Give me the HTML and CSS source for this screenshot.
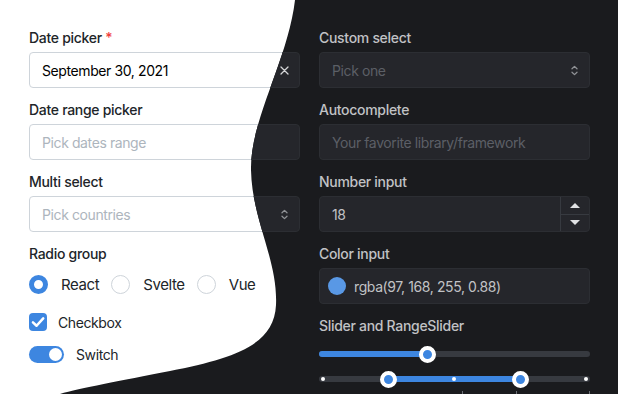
FILE: index.html
```html
<!DOCTYPE html>
<html lang="en">
<head>
    <meta charset="UTF-8">
    <meta name="viewport" content="width=device-width, initial-scale=1.0">
    <title>Components</title>
    <link rel="stylesheet" href="styles.css">
</head>
<body>
    <div class="stage">
        <!-- light theme, left column only -->
        <div class="layer layer-light">
            <div class="col">
                <div class="field">
                    <label class="label">Date picker <span class="req">*</span></label>
                    <div class="input">
                        <span class="value">September 30, 2021</span>
                        <svg class="icon" viewBox="0 0 15 15"><path d="M4 4L11 11M11 4L4 11" /></svg>
                    </div>
                </div>
                <div class="field">
                    <label class="label">Date range picker</label>
                    <div class="input"><span class="value placeholder">Pick dates range</span></div>
                </div>
                <div class="field">
                    <label class="label">Multi select</label>
                    <div class="input">
                        <span class="value placeholder">Pick countries</span>
                        <svg class="icon icon-sort" viewBox="0 0 15 15"><path d="M5 5.8L7.5 3.4L10 5.8M5 9.2L7.5 11.6L10 9.2" /></svg>
                    </div>
                </div>
                <label class="label group-label">Radio group</label>
                <div class="radios">
                    <div class="radio-item"><span class="radio on"></span>React</div>
                    <div class="radio-item"><span class="radio"></span>Svelte</div>
                    <div class="radio-item"><span class="radio"></span>Vue</div>
                </div>
                <div class="check-row">
                    <span class="checkbox"><svg viewBox="0 0 10 10"><path d="M2.2 5.2L4.2 7.1L7.9 3" /></svg></span>
                    Checkbox
                </div>
                <div class="switch-row">
                    <span class="switch"><span class="knob"></span></span>
                    Switch
                </div>
            </div>
        </div>

        <!-- dark theme, clipped by the wave -->
        <div class="layer layer-dark">
            <div class="col">
                <div class="field">
                    <label class="label">Date picker <span class="req">*</span></label>
                    <div class="input">
                        <span class="value">September 30, 2021</span>
                        <svg class="icon" viewBox="0 0 15 15"><path d="M4 4L11 11M11 4L4 11" /></svg>
                    </div>
                </div>
                <div class="field">
                    <label class="label">Date range picker</label>
                    <div class="input"><span class="value placeholder">Pick dates range</span></div>
                </div>
                <div class="field">
                    <label class="label">Multi select</label>
                    <div class="input">
                        <span class="value placeholder">Pick countries</span>
                        <svg class="icon icon-sort" viewBox="0 0 15 15"><path d="M5 5.8L7.5 3.4L10 5.8M5 9.2L7.5 11.6L10 9.2" /></svg>
                    </div>
                </div>
            </div>
            <div class="col">
                <div class="field">
                    <label class="label">Custom select</label>
                    <div class="input">
                        <span class="value placeholder">Pick one</span>
                        <svg class="icon icon-sort" viewBox="0 0 15 15"><path d="M5 5.8L7.5 3.4L10 5.8M5 9.2L7.5 11.6L10 9.2" /></svg>
                    </div>
                </div>
                <div class="field">
                    <label class="label">Autocomplete</label>
                    <div class="input"><span class="value placeholder">Your favorite library/framework</span></div>
                </div>
                <div class="field">
                    <label class="label">Number input</label>
                    <div class="input input-number">
                        <span class="value">18</span>
                        <div class="controls">
                            <span class="step"><span class="arrow-up"></span></span>
                            <span class="step"><span class="arrow-down"></span></span>
                        </div>
                    </div>
                </div>
                <div class="field">
                    <label class="label">Color input</label>
                    <div class="input input-color">
                        <span class="swatch"></span>
                        <span class="value">rgba(97, 168, 255, 0.88)</span>
                    </div>
                </div>
                <label class="label">Slider and RangeSlider</label>
                <div class="slider">
                    <div class="track"></div>
                    <div class="bar" style="left: 0; width: 40%;"></div>
                    <span class="thumb" style="left: 40%;"></span>
                </div>
                <div class="slider slider-range">
                    <div class="track"></div>
                    <div class="bar" style="left: 25.5%; width: 48.7%;"></div>
                    <span class="mark" style="left: 1.5%;"></span>
                    <span class="mark" style="left: 49.8%;"></span>
                    <span class="mark" style="left: 98.5%;"></span>
                    <span class="thumb" style="left: 25.5%;"></span>
                    <span class="thumb" style="left: 74.2%;"></span>
                </div>
                <div class="ticks">
                    <span class="tick" style="left: 52.8%;"></span>
                    <span class="tick" style="left: 72.7%;"></span>
                    <span class="tick" style="left: 99.6%;"></span>
                </div>
            </div>
        </div>
    </div>
</body>
</html>
```

FILE: styles.css
```css
* {
    box-sizing: border-box;
}
body {
    margin: 0;
    font-family: Inter, "Noto Sans", sans-serif;
}
.stage {
    position: relative;
    width: 618px;
    height: 394px;
    overflow: hidden;
    background-color: #fff;
}
.layer {
    display: grid;
    grid-template-columns: 271px 271px;
    column-gap: 19px;
    align-items: start;
    height: 100%;
    padding: 28px 28px 0 29px;
    color: #212529;
}
.layer-dark {
    position: absolute;
    inset: 0;
    background-color: #1a1b1e;
    color: #c1c2c5;
    clip-path: path('M295 0 C288 60 250 120 251 170 C252 220 278 260 276 305 C274 345 235 358 170 371 C120 381 80 388 60 394 L618 394 L618 0 Z');
}
.field {
    margin-bottom: 12px;
}
.label {
    display: block;
    font-size: 14px;
    font-weight: 500;
    line-height: 20px;
    letter-spacing: -0.3px;
    margin-bottom: 4px;
}
.req {
    color: #f03e3e;
}
.input {
    display: flex;
    align-items: center;
    height: 36px;
    padding: 0 7px 0 12px;
    border: 1px solid #ced4da;
    border-radius: 4px;
    background-color: #fff;
    font-size: 14px;
    letter-spacing: -0.4px;
    color: #000;
}
.layer-dark .input {
    border-color: #2c2e33;
    background-color: #25262b;
    color: #c1c2c5;
}
.value {
    flex: 1;
    white-space: nowrap;
}
.placeholder {
    color: #adb5bd;
}
.layer-dark .placeholder {
    color: #5c5f66;
}
.icon {
    width: 15px;
    height: 15px;
    fill: none;
    stroke: #868e96;
    stroke-width: 1.3;
    stroke-linecap: round;
    stroke-linejoin: round;
}
.layer-dark .icon {
    stroke: #d5d6d8;
}
.layer-dark .icon-sort {
    stroke: #909296;
}
.input-number {
    padding-right: 0;
}
.controls {
    display: flex;
    flex-direction: column;
    align-self: stretch;
    width: 29px;
    border-left: 1px solid #373a40;
}
.step {
    flex: 1;
    display: flex;
    align-items: center;
    justify-content: center;
}
.step + .step {
    border-top: 1px solid #373a40;
}
.arrow-up, .arrow-down {
    width: 0;
    height: 0;
    border-left: 5px solid transparent;
    border-right: 5px solid transparent;
}
.arrow-up {
    border-bottom: 5px solid #e0e1e3;
}
.arrow-down {
    border-top: 5px solid #e0e1e3;
}
.input-color {
    padding-left: 8px;
}
.swatch {
    width: 18px;
    height: 18px;
    margin-right: 8px;
    border-radius: 50%;
    background-color: rgba(97, 168, 255, 0.88);
}
.group-label {
    margin-bottom: 10px;
}
.radios {
    display: flex;
    align-items: center;
    gap: 12px;
    height: 20px;
    font-size: 15px;
    letter-spacing: -0.4px;
}
.radio-item {
    display: flex;
    align-items: center;
    gap: 13px;
}
.radio {
    width: 19px;
    height: 19px;
    border: 1px solid #ced4da;
    border-radius: 50%;
    background-color: #fff;
}
.radio.on {
    border: 5px solid #3d86e0;
}
.check-row, .switch-row {
    display: flex;
    align-items: center;
    height: 20px;
    font-size: 14px;
    letter-spacing: -0.4px;
}
.check-row {
    margin-top: 18px;
    gap: 11px;
}
.switch-row {
    margin-top: 12px;
    gap: 12px;
}
.checkbox {
    display: flex;
    width: 18px;
    height: 18px;
    border-radius: 4px;
    background-color: #3d86e0;
}
.checkbox svg {
    width: 18px;
    height: 18px;
    fill: none;
    stroke: #fff;
    stroke-width: 1.4;
    stroke-linecap: round;
    stroke-linejoin: round;
}
.switch {
    position: relative;
    width: 35px;
    height: 17px;
    border-radius: 9px;
    background-color: #3d86e0;
}
.knob {
    position: absolute;
    top: 2px;
    right: 2px;
    width: 13px;
    height: 13px;
    border-radius: 50%;
    background-color: #fff;
}
.slider {
    position: relative;
    height: 16px;
    margin-top: 10px;
}
.slider-range {
    margin-top: 9px;
}
.track, .bar {
    position: absolute;
    top: 5px;
    height: 6px;
    border-radius: 3px;
}
.track {
    left: 0;
    right: 0;
    background-color: #373a40;
}
.bar {
    background-color: #3d86e0;
}
.thumb {
    position: absolute;
    top: 0;
    width: 17px;
    height: 17px;
    margin-left: -8px;
    border: 4px solid #fff;
    border-radius: 50%;
    background-color: #3d86e0;
}
.mark {
    position: absolute;
    top: 6px;
    width: 4px;
    height: 4px;
    margin-left: -2px;
    border-radius: 50%;
    background-color: #fff;
}
.ticks {
    position: relative;
    height: 4px;
    margin-top: 4px;
}
.tick {
    position: absolute;
    top: 0;
    width: 1px;
    height: 4px;
    background-color: #6b6e75;
}
```
